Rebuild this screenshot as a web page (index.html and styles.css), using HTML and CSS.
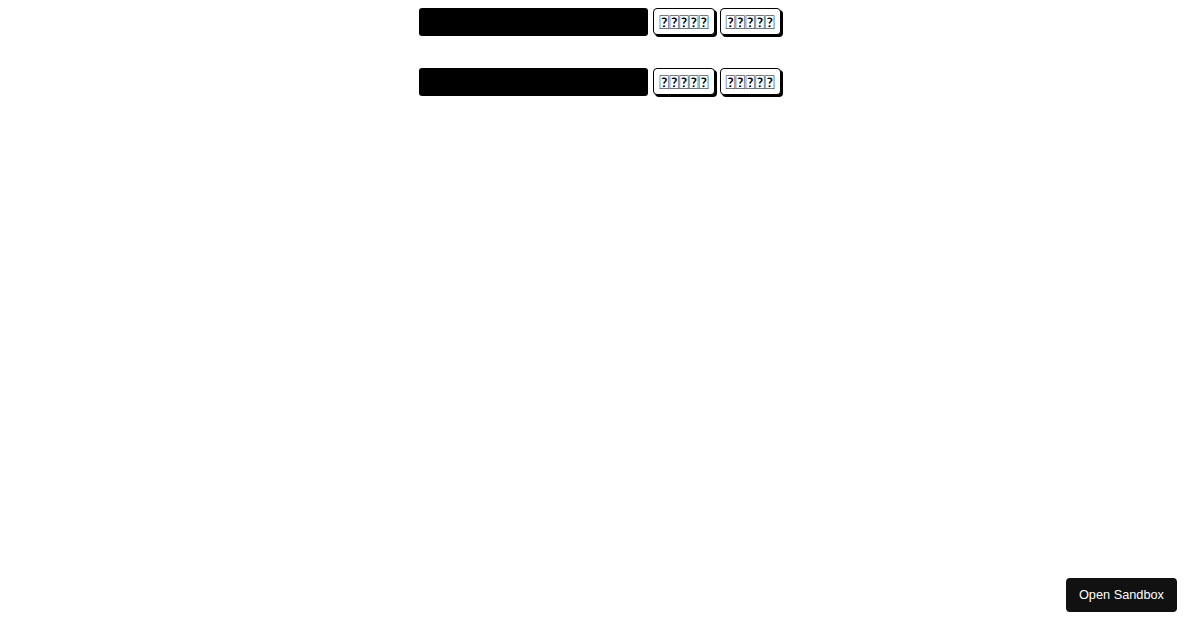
FILE: index.html
```html
<!DOCTYPE html>
<html>
<head>
<meta charset="utf-8">
<link rel="stylesheet" href="styles.css">
</head>
<body>
<main class="list">
  <div class="row">
    <input class="field" type="text">
    <button class="btn">&#x10FFFD;&#x10FFFD;&#x10FFFD;&#x10FFFD;&#x10FFFD;</button>
    <button class="btn">&#x10FFFD;&#x10FFFD;&#x10FFFD;&#x10FFFD;&#x10FFFD;</button>
  </div>
  <div class="row">
    <input class="field" type="text">
    <button class="btn">&#x10FFFD;&#x10FFFD;&#x10FFFD;&#x10FFFD;&#x10FFFD;</button>
    <button class="btn">&#x10FFFD;&#x10FFFD;&#x10FFFD;&#x10FFFD;&#x10FFFD;</button>
  </div>
</main>
<a class="sandbox" href="#">Open Sandbox</a>
</body>
</html>
```
FILE: styles.css
```css
html, body {
  margin: 0;
  background: #fff;
}
body {
  padding: 8px;
  font-family: Lato, sans-serif;
}
.list {
  display: flex;
  flex-direction: column;
  align-items: center;
  gap: 32px;
}
.row {
  display: flex;
  align-items: flex-start;
  gap: 5px;
}
.field {
  width: 229px;
  height: 28px;
  box-sizing: border-box;
  margin: 0;
  border: none;
  border-radius: 3px;
  background: #000;
  color: #fff;
  padding: 0 6px;
}
.btn {
  height: 27px;
  box-sizing: border-box;
  margin: 0;
  padding: 1px 5px 0;
  border: 1px solid #000;
  border-radius: 4px;
  background: #fff;
  color: #000;
  box-shadow: 2px 2px 0 #000;
  font-family: Lato, sans-serif;
  font-size: 18.5px;
  line-height: 1;
}
.sandbox {
  position: fixed;
  right: 23px;
  bottom: 18px;
  background: #111;
  color: #fff;
  text-decoration: none;
  font-family: "Liberation Sans", Arial, sans-serif;
  font-size: 12.75px;
  line-height: 34px;
  padding: 0 13px;
  border-radius: 4px;
}
```
